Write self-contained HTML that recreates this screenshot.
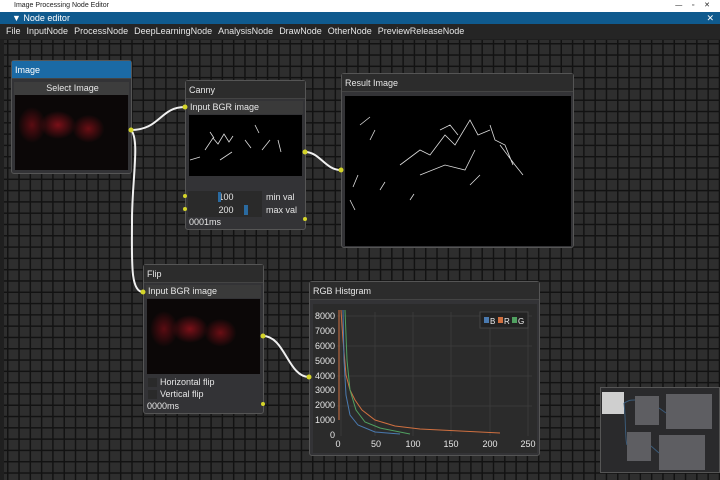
<!DOCTYPE html>
<html><head><style>
*{margin:0;padding:0;box-sizing:border-box}
body{width:720px;height:480px;overflow:hidden;background:#1f1f1f;font-family:"Liberation Sans",sans-serif;font-size:9px;color:#e6e6e6;position:relative}
.abs{position:absolute}
#tb{left:0;top:0;width:720px;height:12px;background:#fff;color:#222;font-size:7px;line-height:12px;padding-left:14px}
#nb{left:0;top:12px;width:720px;height:12px;background:#0f5a8e;color:#fff;line-height:12px;padding-left:12px;font-size:9px}
#mb{left:0;top:24px;width:720px;height:15px;background:#252525;line-height:15px;padding-left:6px;word-spacing:0}
#mb span{margin-right:6px}
#cv{left:4px;top:40px;width:716px;height:440px;background-color:#2e2e2e;background-image:linear-gradient(#121212 1.5px,transparent 1.5px),linear-gradient(90deg,#121212 1.5px,transparent 1.5px);background-size:11.3px 11.3px;background-position:3px 3px}
.node{position:absolute;background:#333336;border:1px solid #555;border-radius:3px}
.hd{height:18px;background:#2c2c2c;line-height:18px;padding-left:3px;border-bottom:1px solid #444}
.row{position:absolute;left:2px;right:2px;height:13px;line-height:13px;padding-left:2px}
.img{position:absolute;background:#000}
</style></head><body>
<div id="tb" class="abs">Image Processing Node Editor<span style="position:absolute;right:10px">—&nbsp;&nbsp;&nbsp;&nbsp;&nbsp;▫&nbsp;&nbsp;&nbsp;&nbsp;&nbsp;✕</span></div>
<div id="nb" class="abs">▼ Node editor<span style="position:absolute;right:6px">✕</span></div>
<div id="mb" class="abs"><span>File</span><span>InputNode</span><span>ProcessNode</span><span>DeepLearningNode</span><span>AnalysisNode</span><span>DrawNode</span><span>OtherNode</span><span>PreviewReleaseNode</span></div>
<div id="cv" class="abs"></div>

<div class="node" style="left:11px;top:60px;width:121px;height:114px">
 <div class="hd" style="background:#1b6aa5;color:#fff">Image</div>
 <div class="row" style="top:21px;background:#3d3d3d;text-align:center">Select Image</div>
 <div class="img" style="left:3px;top:34px;width:113px;height:75px;background:radial-gradient(ellipse 18px 14px at 38% 40%,#7a1018,transparent),radial-gradient(ellipse 16px 14px at 65% 45%,#6a0e14,transparent),radial-gradient(ellipse 14px 18px at 15% 40%,#5a0c12,transparent),#0b0707"></div>
</div>

<div class="node" style="left:185px;top:80px;width:121px;height:150px">
 <div class="hd">Canny</div>
 <div class="row" style="top:20px;background:#3a3a3a">Input BGR image</div>
 <div class="img" style="left:3px;top:34px;width:113px;height:61px"></div>
 <div class="row" style="top:110px;width:74px;background:#2a2a2a;text-align:center">100</div>
 <div class="abs" style="left:32px;top:111px;width:3px;height:10px;background:#2a6aa0"></div>
 <div class="abs" style="left:80px;top:110px;line-height:13px">min val</div>
 <div class="row" style="top:123px;width:74px;background:#2a2a2a;text-align:center">200</div>
 <div class="abs" style="left:58px;top:124px;width:4px;height:10px;background:#2a6aa0"></div>
 <div class="abs" style="left:80px;top:123px;line-height:13px">max val</div>
 <div class="abs" style="left:3px;top:135px;line-height:13px">0001ms</div>
</div>

<div class="node" style="left:341px;top:73px;width:233px;height:175px">
 <div class="hd">Result Image</div>
 <div class="img" style="left:3px;top:22px;width:226px;height:150px"></div>
</div>

<div class="node" style="left:143px;top:264px;width:121px;height:150px">
 <div class="hd">Flip</div>
 <div class="row" style="top:20px;background:#3a3a3a">Input BGR image</div>
 <div class="img" style="left:3px;top:34px;width:113px;height:75px;background:radial-gradient(ellipse 18px 14px at 38% 40%,#7a1018,transparent),radial-gradient(ellipse 16px 14px at 65% 45%,#6a0e14,transparent),radial-gradient(ellipse 14px 18px at 15% 40%,#5a0c12,transparent),#0b0707"></div>
 <div class="abs" style="left:4px;top:111px;line-height:12px"><span style="display:inline-block;width:9px;height:9px;background:#2a2a2a;vertical-align:middle;margin-right:3px"></span>Horizontal flip</div>
 <div class="abs" style="left:4px;top:123px;line-height:12px"><span style="display:inline-block;width:9px;height:9px;background:#2a2a2a;vertical-align:middle;margin-right:3px"></span>Vertical flip</div>
 <div class="abs" style="left:3px;top:135px;line-height:13px">0000ms</div>
</div>

<div class="node" style="left:309px;top:281px;width:231px;height:175px">
 <div class="hd">RGB Histgram</div>
 <div class="abs" style="left:3px;top:22px;width:224px;height:149px;background:#2b2b2b"></div>
</div>

<svg class="abs" style="left:0;top:0" width="720" height="480">
 <g stroke="#f0f0f0" stroke-width="2" fill="none">
  <path d="M131,130 C160,130 160,107 185,107"/>
  <path d="M131,130 C140,140 132,180 132,220 C132,260 130,292 143,292"/>
  <path d="M305,152 C320,152 325,170 341,170"/>
  <path d="M263,336 C285,336 288,377 309,377"/>
 </g>
 <g fill="#d4d42a">
  <circle cx="131" cy="130" r="2.5"/><circle cx="185" cy="107" r="2.5"/><circle cx="185" cy="196" r="2"/><circle cx="185" cy="209" r="2"/><circle cx="305" cy="219" r="2"/><circle cx="305" cy="152" r="2.5"/><circle cx="341" cy="170" r="2.5"/><circle cx="143" cy="292" r="2.5"/><circle cx="263" cy="336" r="2.5"/><circle cx="263" cy="404" r="2"/><circle cx="309" cy="377" r="2.5"/>
 </g>
 <g stroke="#ddd" stroke-width="0.8" fill="none">
  <path d="M190,160 l10,-3 M205,150 l8,-12 l5,6 l6,-10 l5,8 l4,-6 M220,160 l12,-8 M245,140 l6,8 M262,150 l8,-10 M278,140 l3,12 M210,132 l4,6 M255,125 l4,8"/>
  <path d="M400,165 l20,-15 l10,5 l15,-20 l10,10 l15,-25 l8,15 l12,-5 M420,175 l25,-10 l20,5 l10,-20 M360,125 l10,-8 M370,140 l5,-10 M350,200 l5,10 M358,175 l-5,12 M490,125 l5,15 l10,5 l8,20 M470,185 l10,-10 M440,130 l10,-5 l8,10 M500,145 l15,20 l8,10 M380,190 l5,-8 M410,200 l4,-6"/>
 </g>
 <g stroke="#3a3a3a" stroke-width="1">
  <path d="M341,312 V436 M375,312 V436 M413,312 V436 M451,312 V436 M490,312 V436 M528,312 V436"/>
  <path d="M337,316 H532 M337,346 H532 M337,376 H532 M337,406 H532"/>
 </g>
 <g font-size="9" fill="#e6e6e6" font-family="Liberation Sans">
  <text x="335" y="319" text-anchor="end">8000</text><text x="335" y="334" text-anchor="end">7000</text><text x="335" y="349" text-anchor="end">6000</text><text x="335" y="364" text-anchor="end">5000</text><text x="335" y="379" text-anchor="end">4000</text><text x="335" y="393" text-anchor="end">3000</text><text x="335" y="408" text-anchor="end">2000</text><text x="335" y="423" text-anchor="end">1000</text><text x="335" y="438" text-anchor="end">0</text>
  <text x="338" y="447" text-anchor="middle">0</text><text x="376" y="447" text-anchor="middle">50</text><text x="413" y="447" text-anchor="middle">100</text><text x="451" y="447" text-anchor="middle">150</text><text x="490" y="447" text-anchor="middle">200</text><text x="528" y="447" text-anchor="middle">250</text>
 </g>
 <rect x="480" y="312" width="48" height="16" fill="#222" stroke="#444"/>
 <rect x="484" y="317" width="5" height="6" fill="#4a7ab0"/><text x="490" y="324" font-size="8" fill="#eee">B</text>
 <rect x="498" y="317" width="5" height="6" fill="#d07040"/><text x="504" y="324" font-size="8" fill="#eee">R</text>
 <rect x="512" y="317" width="5" height="6" fill="#50a060"/><text x="518" y="324" font-size="8" fill="#eee">G</text>
 <g fill="none" stroke-width="1">
  <path stroke="#d07040" d="M339,310 V420 M341,310 L343,340 L346,375 L350,390 L355,400 L362,410 L375,420 L395,426 L420,429 L460,431 L500,433"/>
  <path stroke="#50a060" d="M345,310 L347,360 L350,390 L356,410 L365,422 L380,428 L410,434"/>
  <path stroke="#4a7ab0" d="M343,310 L344,360 L346,395 L350,415 L358,425 L375,432 L400,434"/>
 </g>
 <rect x="600.5" y="387.5" width="119" height="85" fill="#2a2a2c" stroke="#555"/>
 <rect x="602" y="392" width="22" height="22" fill="#cfcfcf"/>
 <rect x="635" y="396" width="24" height="29" fill="#5e5e62"/>
 <rect x="666" y="394" width="46" height="35" fill="#5e5e62"/>
 <rect x="627" y="432" width="24" height="29" fill="#5e5e62"/>
 <rect x="659" y="435" width="46" height="35" fill="#5e5e62"/>
 <path d="M624,403 C630,400 630,400 635,400 M624,403 C626,420 625,440 627,445 M659,408 L666,413 M651,446 L659,453" stroke="#3a5a78" fill="none"/>
</svg>
</body></html>
